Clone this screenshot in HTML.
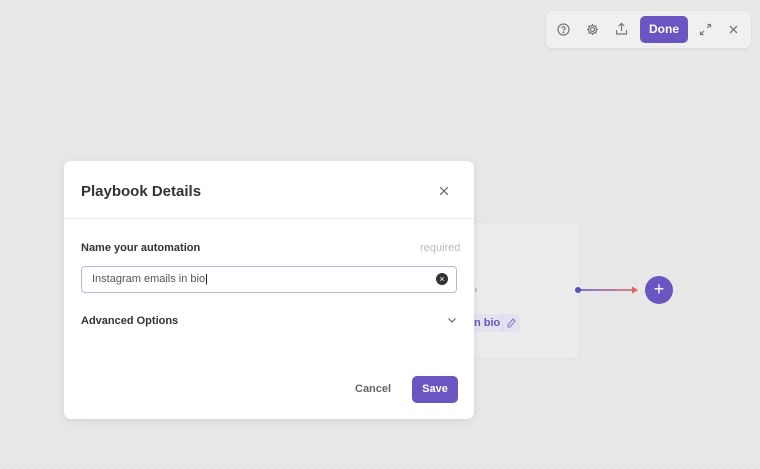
<!DOCTYPE html>
<html><head><style>
body{margin:0;width:760px;height:469px;overflow:hidden;background-color:#e8e8e8;background-image:radial-gradient(#dadada 0.7px,transparent 0.9px);background-size:8px 8px;font-family:"Liberation Sans",sans-serif;position:relative}
.abs{position:absolute}
.tb{left:546px;top:11px;width:205px;height:37px;background:#f0f0f0;border-radius:6px;box-shadow:0 1px 3px rgba(0,0,0,.08)}
.done{left:94px;top:5px;width:48px;height:27px;background:#6a55c2;border-radius:5px;color:#fff;font-size:12px;font-weight:bold;line-height:27px;text-align:center}
.node{left:440px;top:222px;width:138px;height:135px;background:#ececec;border-radius:8px;border:1px solid #e2e2e2}
.modal{left:64px;top:161px;width:410px;height:258px;background:#fff;border-radius:7px;box-shadow:0 2px 10px rgba(0,0,0,.08)}
</style></head><body>
<div class="abs tb">
<svg class="abs" style="left:11px;top:12px" width="13" height="13" viewBox="0 0 13 13" fill="none" stroke="#777" stroke-width="1.2"><circle cx="6.5" cy="6.5" r="5.5"/><path d="M5 5.2a1.5 1.5 0 1 1 2 1.4c-.4.2-.5.5-.5.9"/><circle cx="6.5" cy="9.3" r=".4" fill="#777"/></svg>
<svg class="abs" style="left:40px;top:12px" width="13" height="13" viewBox="0 0 13 13" fill="none" stroke="#777" stroke-width="1.2"><circle cx="6.5" cy="6.5" r="2"/><path d="M6.5 1v1.5M6.5 10.5V12M1 6.5h1.5M10.5 6.5H12M2.6 2.6l1 1M9.4 9.4l1 1M2.6 10.4l1-1M9.4 3.6l1-1"/><circle cx="6.5" cy="6.5" r="4"/></svg>
<svg class="abs" style="left:69px;top:11px" width="13" height="14" viewBox="0 0 13 14" fill="none" stroke="#777" stroke-width="1.2"><path d="M6.5 9V1.5M3.8 4l2.7-2.7L9.2 4M1.5 8v4h10V8"/></svg>
<div class="abs done">Done</div>
<svg class="abs" style="left:153px;top:12px" width="13" height="13" viewBox="0 0 13 13" fill="none" stroke="#777" stroke-width="1.2"><path d="M8 5l3.5-3.5M8.5 1.5h3v3M5 8l-3.5 3.5M1.5 8.5v3h3"/></svg>
<svg class="abs" style="left:183px;top:14px" width="9" height="9" viewBox="0 0 9 9" stroke="#777" stroke-width="1.3"><path d="M1 1l7 7M8 1L1 8"/></svg>
</div>
<div class="abs node"></div>
<div class="abs" style="left:474px;top:284px;font-size:11px;color:#999">›</div>
<div class="abs" style="left:440px;top:314px;width:80px;height:18px;background:#e4e2ef;border-radius:3px"></div>
<div class="abs" style="left:474px;top:317px;font-size:11px;font-weight:bold;color:#6a55c2">n bio</div>
<div class="abs" style="left:502px;top:314px;width:1px;height:18px;background:#d6d3e4"></div>
<svg class="abs" style="left:507px;top:318px" width="9" height="10" viewBox="0 0 9 10" fill="none" stroke="#8a7bd0" stroke-width="1.1"><path d="M6 1l2 2-5 6H1V7z"/></svg>
<svg class="abs" style="left:574px;top:284px" width="68" height="12"><defs><linearGradient id="g" gradientUnits="userSpaceOnUse" x1="4" y1="0" x2="64" y2="0"><stop offset="0" stop-color="#5a4fc0"/><stop offset="1" stop-color="#e06060"/></linearGradient></defs><circle cx="4" cy="6" r="3" fill="#5a4fc0"/><rect x="4" y="5.25" width="56" height="1.5" fill="url(#g)"/><path d="M58 2.5L64 6 58 9.5z" fill="#e06060"/></svg>
<div class="abs" style="left:645px;top:276px;width:28px;height:28px;border-radius:50%;background:#6a55c2;color:#fff;font-size:18px;line-height:27px;text-align:center">+</div>
<div class="abs modal">
<div class="abs" style="left:17px;top:22px;font-size:15px;font-weight:bold;color:#333">Playbook Details</div>
<svg class="abs" style="left:376px;top:26px" width="8" height="8" stroke="#666" stroke-width="1.2"><path d="M0 0l8 8M8 0L0 8"/></svg>
<div class="abs" style="left:0;top:57px;width:410px;height:1px;background:#ececec"></div>
<div class="abs" style="left:17px;top:81px;font-size:11px;font-weight:bold;color:#333">Name your automation</div>
<div class="abs" style="left:356px;top:81px;font-size:11px;color:#bbb">required</div>
<div class="abs" style="left:17px;top:105px;width:374px;height:25px;border:1.5px solid #bdb5e6;border-radius:4px"></div>
<div class="abs" style="left:28px;top:112px;font-size:11px;color:#555">Instagram emails in bio<span style="color:#000">|</span></div>
<div class="abs" style="left:372px;top:112px;width:12px;height:12px;border-radius:50%;background:#333;color:#fff;font-size:9px;line-height:12px;text-align:center">×</div>
<div class="abs" style="left:17px;top:154px;font-size:11px;font-weight:bold;color:#333">Advanced Options</div>
<svg class="abs" style="left:384px;top:157px" width="8" height="5" fill="none" stroke="#666" stroke-width="1.2"><path d="M0.5 0.5l3.5 3.5 3.5-3.5"/></svg>
<div class="abs" style="left:291px;top:222px;font-size:11px;font-weight:bold;color:#666">Cancel</div>
<div class="abs" style="left:348px;top:215px;width:46px;height:27px;border-radius:5px;background:#6a55c2;color:#fff;font-size:11px;font-weight:bold;line-height:27px;text-align:center">Save</div>
</div>
</body></html>
